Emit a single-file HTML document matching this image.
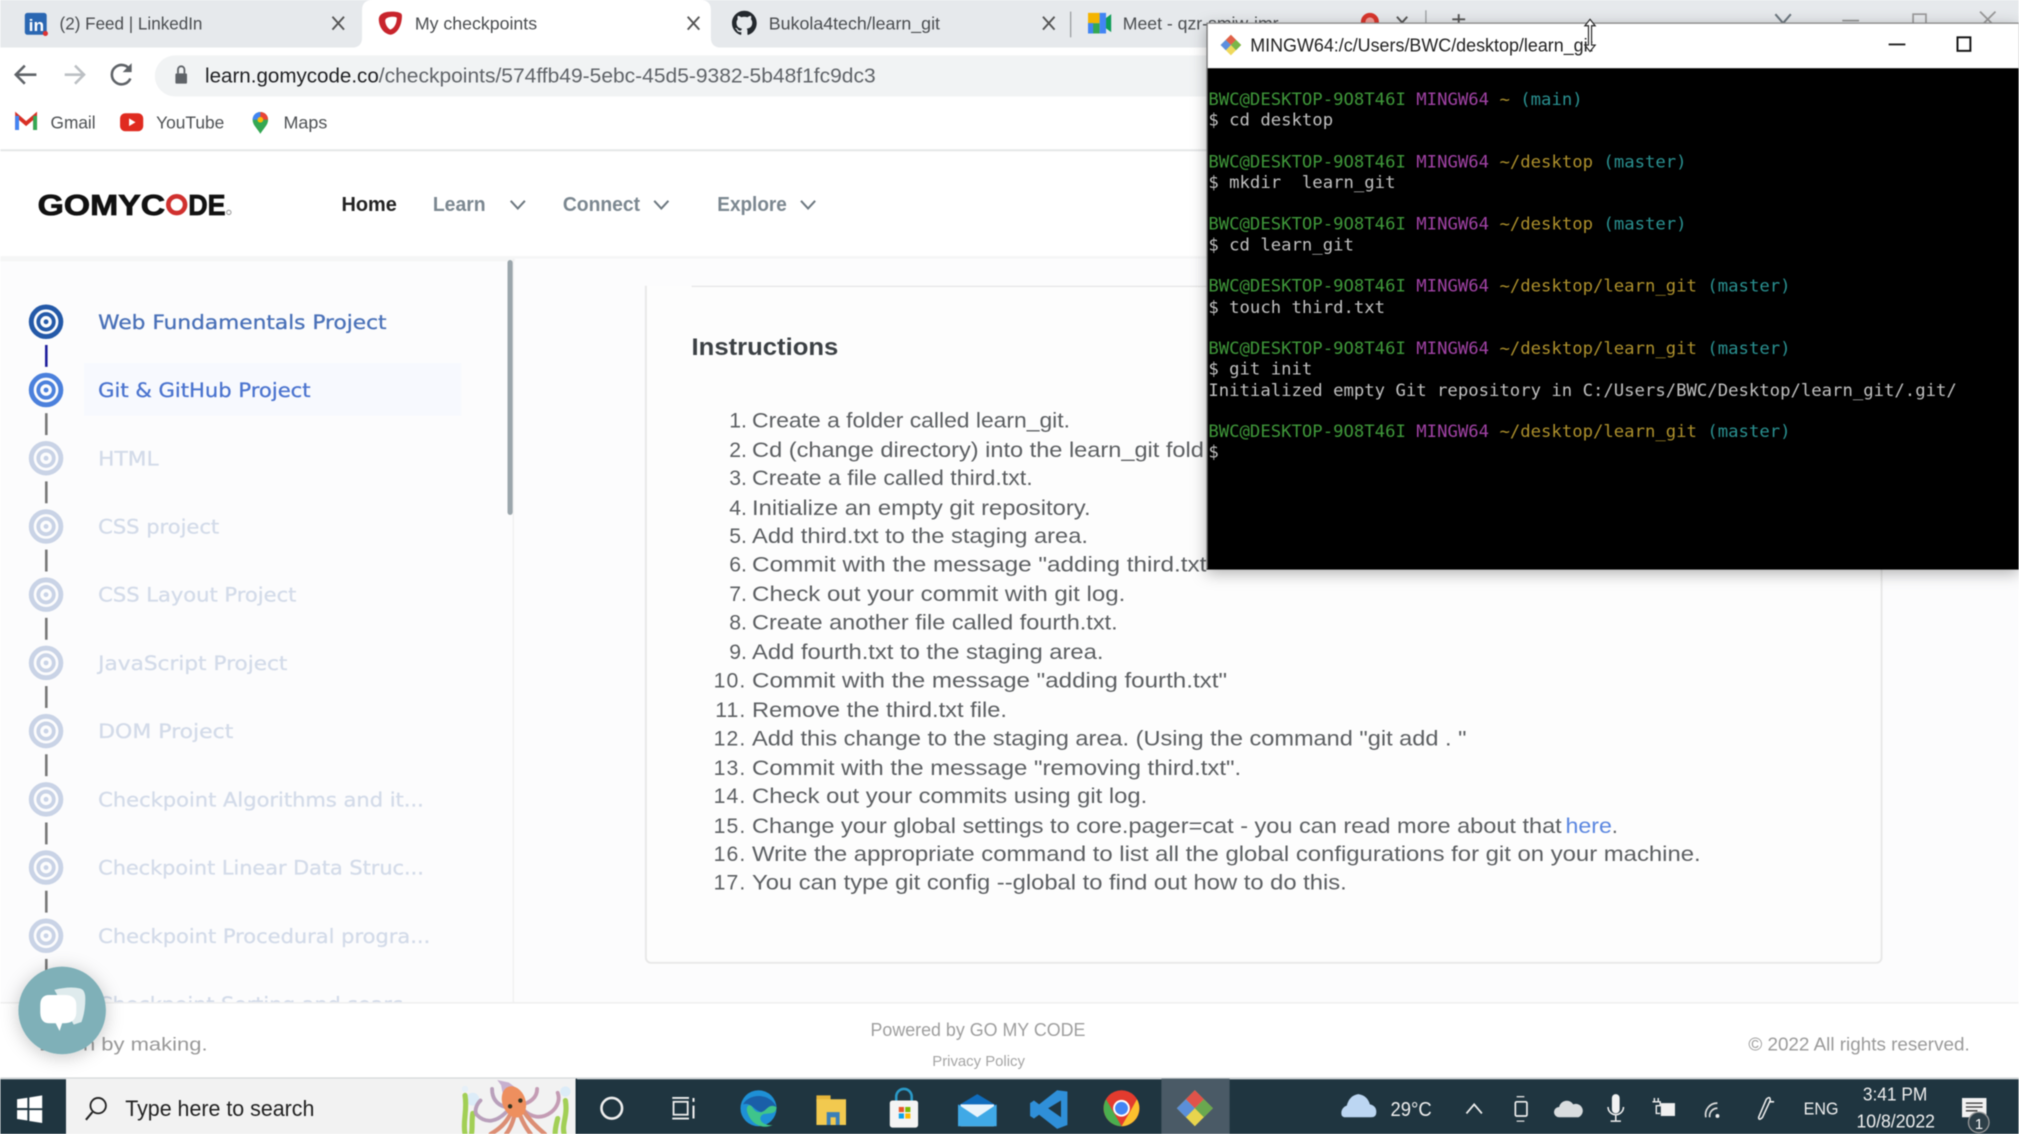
<!DOCTYPE html>
<html lang="en"><head><meta charset="utf-8"><title>My checkpoints</title>
<style>
html,body{margin:0;padding:0;width:2019px;height:1134px;overflow:hidden;background:#fff}
svg{display:block;filter:blur(.5px)}
text{font-family:"Liberation Sans",sans-serif;white-space:pre}
.tab{font-size:13.5px;fill:#4a4d50}
.x{stroke:#555;stroke-width:1.5;fill:none}
.side{font-family:"DejaVu Sans",sans-serif;font-size:15.5px;fill:#d3dbe9;stroke:#d3dbe9;stroke-width:.25}
.nav{font-size:16px;font-weight:bold;fill:#7b8790}
.chev{fill:none;stroke:#6d7880;stroke-width:1.6}
.li{font-size:16.5px;fill:#5c5f62}
.t{font-family:"DejaVu Sans Mono",monospace;font-size:13.42px;fill:#c0c0c0}
.g{fill:#3f983a}.p{fill:#a042a4}.y{fill:#ad902c}.c{fill:#2a9090}
</style></head><body>
<svg xmlns="http://www.w3.org/2000/svg" width="2019" height="1134" viewBox="0 0 1568 881">
<defs>
<filter id="sh" x="-5%" y="-5%" width="110%" height="115%"><feDropShadow dx="0" dy="3" stdDeviation="6" flood-color="#000" flood-opacity=".3"/></filter>
<filter id="sh2" x="-30%" y="-30%" width="160%" height="160%"><feDropShadow dx="0" dy="2" stdDeviation="7" flood-color="#000" flood-opacity=".22"/></filter>
<clipPath id="sideclip"><rect x="0" y="201" width="393" height="578"/></clipPath>
<g id="tgt"><circle r="11.500" fill="none" stroke="currentColor" stroke-width="3.800"/><circle r="6" fill="none" stroke="currentColor" stroke-width="3"/><circle r="1.900" fill="currentColor"/></g>
</defs>

<rect width="1568" height="881" fill="#fff"/>

<!-- Tab strip -->
<rect width="1568" height="37" fill="#e6e9ec"/>
<path d="M273 37q8 0 8-8V8q0-8 8-8h255q8 0 8 8v21q0 8 8 8z" fill="#fff"/>
<rect x="19" y="10" width="17" height="17" rx="2" fill="#2a67b2"/>
<text x="22" y="24" font-size="13" font-weight="bold" fill="#fff" textLength="12" lengthAdjust="spacingAndGlyphs">in</text>
<circle cx="35" cy="26" r="2" fill="#d33"/>
<text class="tab" x="46" y="23" textLength="111" lengthAdjust="spacingAndGlyphs">(2) Feed | LinkedIn</text>
<path class="x" d="M258 13l9 10m0-10l-9 10"/>
<path d="M304 9c5 0 8 1 8 3 0 7-3 14-9 15-6-1-9-7-9-12 0-4 4-6 10-6z" fill="#c8242c"/><path d="M305 13c2 0 3 .5 3 1 0 4-2 8-5 9-2-1-4-4-4-7 0-2 3-3 6-3z" fill="#fff"/>
<text class="tab" x="322" y="23" textLength="95" lengthAdjust="spacingAndGlyphs">My checkpoints</text>
<path class="x" d="M534 13l9 10m0-10l-9 10"/>
<path transform="translate(568.400 8.400) scale(1.200)" fill="#24292e" d="M8 0C3.58 0 0 3.58 0 8c0 3.54 2.29 6.53 5.47 7.59.4.07.55-.17.55-.38 0-.19-.01-.82-.01-1.49-2.01.37-2.53-.49-2.69-.94-.09-.23-.48-.94-.82-1.13-.28-.15-.68-.52-.01-.53.63-.01 1.08.58 1.23.82.72 1.21 1.87.87 2.33.66.07-.52.28-.87.51-1.07-1.78-.2-3.64-.89-3.64-3.95 0-.87.31-1.59.82-2.15-.08-.2-.36-1.02.08-2.12 0 0 .67-.21 2.2.82.64-.18 1.32-.27 2-.27.68 0 1.36.09 2 .27 1.53-1.04 2.2-.82 2.2-.82.44 1.1.16 1.92.08 2.12.51.56.82 1.27.82 2.15 0 3.07-1.87 3.75-3.65 3.95.29.25.54.73.54 1.48 0 1.07-.01 1.93-.01 2.2 0 .21.15.46.55.38A8.013 8.013 0 0016 8c0-4.420-3.580-8-8-8z"/>
<text class="tab" x="597" y="23" textLength="133" lengthAdjust="spacingAndGlyphs">Bukola4tech/learn_git</text>
<path class="x" d="M810 13l9 10m0-10l-9 10"/>
<rect x="831" y="9" width="1" height="20" fill="#9a9da0"/>
<rect x="845" y="10" width="9" height="8" fill="#f4b400"/><rect x="845" y="18" width="9" height="8" fill="#34a853"/><rect x="854" y="10" width="5" height="16" fill="#4285f4"/><path d="M859 14l4-3v14l-4-3z" fill="#0f9d58"/><rect x="845" y="18" width="4" height="8" fill="#4285f4"/>
<text class="tab" x="872" y="23" textLength="121" lengthAdjust="spacingAndGlyphs">Meet - qzr-smiw-jmr</text>
<circle cx="1064" cy="17" r="7" fill="#d8352c"/><circle cx="1064" cy="17" r="3.500" fill="#f2a09a"/>
<path class="x" d="M1085 13l8 9m0-9l-8 9"/>
<rect x="1107" y="8" width="1" height="10" fill="#9a9da0"/>
<path d="M1133 11v8m-5-4h10" stroke="#555" stroke-width="1.500"/>
<path class="chev" d="M1379 11l6 7 6-7" stroke="#888"/>
<path d="M1431 16h13" stroke="#999" stroke-width="1.400"/>
<rect x="1486" y="11" width="10" height="9" fill="none" stroke="#999" stroke-width="1.300"/>
<path d="M1538 9l12 12m0-12l-12 12" stroke="#999" stroke-width="1.400"/>

<!-- Toolbar -->
<rect x="0" y="37" width="1568" height="40" fill="#fff"/>
<rect x="120" y="43" width="900" height="32" rx="16" fill="#f1f3f4"/>
<path d="M28 58H13m6-7l-7 7 7 7" fill="none" stroke="#5f6368" stroke-width="2"/>
<path d="M50 58h14m-6-7l7 7-7 7" fill="none" stroke="#bcc0c4" stroke-width="2"/>
<path d="M101 55a7.500 7.500 0 1 0 0 6" fill="none" stroke="#5f6368" stroke-width="2"/><path d="M102 49v7h-7z" fill="#5f6368"/>
<rect x="136" y="57" width="9" height="8" rx="1" fill="#5f6368"/><path d="M138 57v-3a2.500 2.500 0 0 1 5 0v3" fill="none" stroke="#5f6368" stroke-width="1.400"/>
<text x="159" y="64" font-size="16" fill="#202124" textLength="135" lengthAdjust="spacingAndGlyphs">learn.gomycode.co</text>
<text x="294" y="64" font-size="16" fill="#5f6368" textLength="386" lengthAdjust="spacingAndGlyphs">/checkpoints/574ffb49-5ebc-45d5-9382-5b48f1fc9dc3</text>

<!-- Bookmarks -->
<path d="M13 101V90l7 6 7-6v11" fill="none" stroke="#d93025" stroke-width="3"/><path d="M13 90v11" stroke="#4285f4" stroke-width="3"/><path d="M27 90v11" stroke="#34a853" stroke-width="3"/>
<text x="39" y="100" font-size="13.500" fill="#4e5154" textLength="35" lengthAdjust="spacingAndGlyphs">Gmail</text>
<rect x="93" y="88" width="18" height="14" rx="4" fill="#e02b20"/><path d="M100 92l5 3-5 3z" fill="#fff"/>
<text x="121" y="100" font-size="13.500" fill="#4e5154" textLength="53" lengthAdjust="spacingAndGlyphs">YouTube</text>
<path d="M202 104c-3-5-6-7-6-11a6 6 0 0 1 12 0c0 4-3 6-6 11z" fill="#34a853"/><path d="M196 93a6 6 0 0 1 6-6l0 6z" fill="#4285f4"/><path d="M202 87a6 6 0 0 1 6 6h-6z" fill="#ea4335"/><circle cx="202" cy="93" r="2.200" fill="#fbbc04"/>
<text x="220" y="100" font-size="13.500" fill="#4e5154" textLength="34" lengthAdjust="spacingAndGlyphs">Maps</text>
<rect x="0" y="116" width="1568" height="1.500" fill="#e4e6e7"/>

<!-- Site nav -->
<text x="29" y="167" font-size="22.500" font-weight="bold" fill="#111" stroke="#111" stroke-width=".6" textLength="99" lengthAdjust="spacingAndGlyphs">GOMYC</text>
<circle cx="137" cy="159" r="6.500" fill="none" stroke="#d0302e" stroke-width="3.600"/>
<text x="146" y="167" font-size="22.500" font-weight="bold" fill="#111" stroke="#111" stroke-width=".6" textLength="29" lengthAdjust="spacingAndGlyphs">DE</text>
<circle cx="177.500" cy="165" r="1.700" fill="none" stroke="#999" stroke-width=".8"/>
<text x="265" y="164" font-size="16" font-weight="bold" fill="#222" textLength="43" lengthAdjust="spacingAndGlyphs">Home</text>
<text class="nav" x="336" y="164" textLength="41" lengthAdjust="spacingAndGlyphs">Learn</text>
<path class="chev" d="M396.500 156l5.500 6 5.500-6"/>
<text class="nav" x="437" y="164" textLength="60" lengthAdjust="spacingAndGlyphs">Connect</text>
<path class="chev" d="M508 156l5.500 6 5.500-6"/>
<text class="nav" x="557" y="164" textLength="54" lengthAdjust="spacingAndGlyphs">Explore</text>
<path class="chev" d="M622 156l5.500 6 5.500-6"/>

<!-- Main background -->
<rect x="0" y="201" width="1568" height="578" fill="#fcfcfd"/>
<rect x="0" y="199" width="1568" height="4" fill="#f5f6f6"/>
<rect x="398" y="201" width="1" height="578" fill="#efefef"/>
<rect x="394" y="202" width="4" height="198" rx="2" fill="#9ba6ac"/>

<!-- Sidebar -->
<rect x="65" y="282" width="293" height="41" fill="#f7f9fe"/>
<g clip-path="url(#sideclip)">
<rect x="34.700" y="268" width="2" height="17" fill="#1d1d9c"/>
<rect x="34.700" y="321" width="2" height="17" fill="#777"/>
<rect x="34.700" y="374" width="2" height="17" fill="#777"/>
<rect x="34.700" y="427" width="2" height="17" fill="#777"/>
<rect x="34.700" y="480" width="2" height="17" fill="#777"/>
<rect x="34.700" y="533" width="2" height="17" fill="#777"/>
<rect x="34.700" y="586" width="2" height="17" fill="#777"/>
<rect x="34.700" y="639" width="2" height="17" fill="#777"/>
<rect x="34.700" y="692" width="2" height="17" fill="#777"/>
<rect x="34.700" y="745" width="2" height="17" fill="#777"/>
<use href="#tgt" x="35.500" y="250" color="#2459a8"/>
<use href="#tgt" x="35.500" y="303" color="#4b80dc"/>
<use href="#tgt" x="35.500" y="356" color="#c9d3e6"/>
<use href="#tgt" x="35.500" y="409" color="#c9d3e6"/>
<use href="#tgt" x="35.500" y="462" color="#c9d3e6"/>
<use href="#tgt" x="35.500" y="515" color="#c9d3e6"/>
<use href="#tgt" x="35.500" y="568" color="#c9d3e6"/>
<use href="#tgt" x="35.500" y="621" color="#c9d3e6"/>
<use href="#tgt" x="35.500" y="674" color="#c9d3e6"/>
<use href="#tgt" x="35.500" y="727" color="#c9d3e6"/>
<text class="side" x="76" y="255.500" style="fill:#4a71b8;stroke:#4a71b8" textLength="224" lengthAdjust="spacingAndGlyphs">Web Fundamentals Project</text>
<text class="side" x="76" y="308.500" style="fill:#4b74cf;stroke:#4b74cf" textLength="165" lengthAdjust="spacingAndGlyphs">Git &amp; GitHub Project</text>
<text class="side" x="76" y="361.500" textLength="47" lengthAdjust="spacingAndGlyphs">HTML</text>
<text class="side" x="76" y="414.500" textLength="94" lengthAdjust="spacingAndGlyphs">CSS project</text>
<text class="side" x="76" y="467.500" textLength="154" lengthAdjust="spacingAndGlyphs">CSS Layout Project</text>
<text class="side" x="76" y="520.500" textLength="147" lengthAdjust="spacingAndGlyphs">JavaScript Project</text>
<text class="side" x="76" y="573.500" textLength="105" lengthAdjust="spacingAndGlyphs">DOM Project</text>
<text class="side" x="76" y="626.500" textLength="253" lengthAdjust="spacingAndGlyphs">Checkpoint Algorithms and it...</text>
<text class="side" x="76" y="679.500" textLength="253" lengthAdjust="spacingAndGlyphs">Checkpoint Linear Data Struc...</text>
<text class="side" x="76" y="732.500" textLength="258" lengthAdjust="spacingAndGlyphs">Checkpoint Procedural progra...</text>
<text class="side" x="76" y="785.500" textLength="252" lengthAdjust="spacingAndGlyphs">Checkpoint Sorting and searc...</text>
</g>

<!-- Card -->
<rect x="501.500" y="205" width="960" height="543" rx="4" fill="#fdfdfd" stroke="#e8e8e8" stroke-width="1.500"/>
<rect x="400" y="201" width="1168" height="21" fill="#fcfcfd"/>
<rect x="537" y="222" width="500" height="1" fill="#e6e6e6"/>
<text x="537" y="276" font-size="19" font-weight="bold" fill="#3c4145" textLength="114" lengthAdjust="spacingAndGlyphs">Instructions</text>
<g text-anchor="end">
<text class="li" x="580" y="332">1.</text><text class="li" x="580" y="355">2.</text><text class="li" x="580" y="377">3.</text><text class="li" x="580" y="400">4.</text><text class="li" x="580" y="422">5.</text><text class="li" x="580" y="444">6.</text><text class="li" x="580" y="467">7.</text><text class="li" x="580" y="489">8.</text><text class="li" x="580" y="512">9.</text><text class="li" x="579.500" y="534" letter-spacing=".8">10.</text><text class="li" x="579.500" y="557" letter-spacing=".8">11.</text><text class="li" x="579.500" y="579" letter-spacing=".8">12.</text><text class="li" x="579.500" y="602" letter-spacing=".8">13.</text><text class="li" x="579.500" y="624" letter-spacing=".8">14.</text><text class="li" x="579.500" y="647" letter-spacing=".8">15.</text><text class="li" x="579.500" y="669" letter-spacing=".8">16.</text><text class="li" x="579.500" y="691" letter-spacing=".8">17.</text>
</g>
<text class="li" x="584" y="332" textLength="247" lengthAdjust="spacingAndGlyphs">Create a folder called learn_git.</text>
<text class="li" x="584" y="355" textLength="351" lengthAdjust="spacingAndGlyphs">Cd (change directory) into the learn_git fold</text>
<text class="li" x="584" y="377" textLength="218" lengthAdjust="spacingAndGlyphs">Create a file called third.txt.</text>
<text class="li" x="584" y="400" textLength="263" lengthAdjust="spacingAndGlyphs">Initialize an empty git repository.</text>
<text class="li" x="584" y="422" textLength="261" lengthAdjust="spacingAndGlyphs">Add third.txt to the staging area.</text>
<text class="li" x="584" y="444" textLength="353" lengthAdjust="spacingAndGlyphs">Commit with the message "adding third.txt</text>
<text class="li" x="584" y="467" textLength="290" lengthAdjust="spacingAndGlyphs">Check out your commit with git log.</text>
<text class="li" x="584" y="489" textLength="284" lengthAdjust="spacingAndGlyphs">Create another file called fourth.txt.</text>
<text class="li" x="584" y="512" textLength="273" lengthAdjust="spacingAndGlyphs">Add fourth.txt to the staging area.</text>
<text class="li" x="584" y="534" textLength="369" lengthAdjust="spacingAndGlyphs">Commit with the message "adding fourth.txt"</text>
<text class="li" x="584" y="557" textLength="198" lengthAdjust="spacingAndGlyphs">Remove the third.txt file.</text>
<text class="li" x="584" y="579" textLength="555" lengthAdjust="spacingAndGlyphs">Add this change to the staging area. (Using the command "git add . "</text>
<text class="li" x="584" y="602" textLength="380" lengthAdjust="spacingAndGlyphs">Commit with the message "removing third.txt".</text>
<text class="li" x="584" y="624" textLength="307" lengthAdjust="spacingAndGlyphs">Check out your commits using git log.</text>
<text class="li" x="584" y="647" textLength="629" lengthAdjust="spacingAndGlyphs">Change your global settings to core.pager=cat - you can read more about that</text>
<text x="1216" y="647" font-size="16.500" fill="#5a86e0" textLength="36" lengthAdjust="spacingAndGlyphs">here</text><text class="li" x="1252" y="647">.</text>
<text class="li" x="584" y="669" textLength="737" lengthAdjust="spacingAndGlyphs">Write the appropriate command to list all the global configurations for git on your machine.</text>
<text class="li" x="584" y="691" textLength="462" lengthAdjust="spacingAndGlyphs">You can type git config --global to find out how to do this.</text>

<!-- Footer -->
<rect x="0" y="779" width="1568" height="59" fill="#fff"/>
<rect x="0" y="778.500" width="1568" height="1.200" fill="#efefef"/>
<text x="30" y="816" font-size="14" fill="#999" textLength="131" lengthAdjust="spacingAndGlyphs">Learn by making.</text>
<text x="676" y="805" font-size="14" fill="#9e9e9e" textLength="167" lengthAdjust="spacingAndGlyphs">Powered by GO MY CODE</text>
<text x="724" y="828" font-size="11.500" fill="#a5a5a5" textLength="72" lengthAdjust="spacingAndGlyphs">Privacy Policy</text>
<text x="1358" y="816" font-size="14" fill="#9a9a9a" textLength="172" lengthAdjust="spacingAndGlyphs">© 2022 All rights reserved.</text>

<!-- Chat bubble -->
<circle cx="48" cy="785" r="34" fill="#7fb0b8" filter="url(#sh2)"/>
<path d="M42 769q12-3 20-1 4 1 4 8 0 10-3 18l-6 2z" fill="#fff" opacity=".75"/>
<path d="M38 773h12q9 0 9 8v5q0 9-10 9h-1l-2 6-3-6h-5q-7 0-7-9v-5q0-8 7-8z" fill="#fff"/>

<!-- Taskbar -->
<rect x="0" y="838" width="1568" height="43" fill="#1f3540"/>
<rect x="0" y="837" width="1568" height="1.500" fill="#d5d8da"/>
<path d="M13 854l8-1.200v8h-8zm9.500-1.400l10-1.600v10h-10zM13 862.500h8v8l-8-1.200zm9.500 0h10v10l-10-1.600z" fill="#fff"/>
<rect x="51" y="838" width="396" height="43" fill="#f2f2f2"/>
<circle cx="76" cy="859" r="6" fill="none" stroke="#222" stroke-width="1.400"/><path d="M71.500 864l-5 6" stroke="#222" stroke-width="1.600"/>
<text x="97" y="867" font-size="17.500" fill="#222" textLength="147" lengthAdjust="spacingAndGlyphs">Type here to search</text>
<!-- octopus -->
<circle cx="367" cy="854" r="5" fill="#dcecf8"/><circle cx="439" cy="848" r="4" fill="#dcecf8"/><circle cx="361" cy="846" r="2.500" fill="#e6f0f8"/>
<g fill="none" stroke-linecap="round">
<path d="M361 881c-2-10 2-18 0-30M366 881c1-6 0-10 1-16M438 881c-2-8 3-14 1-26M431 881c0-5 1-8 2-12" stroke="#a2cf55" stroke-width="4"/>
<path d="M393 864c-8 8-16 9-23 2-2-3 0-8 3-11M392 860c-6-2-10-6-10-14" stroke="#b9a0bb" stroke-width="3"/>
<path d="M406 862c6 6 14 8 22 2 5-4 7-10 5-15M405 858c6-1 12-5 12-12" stroke="#c49cb4" stroke-width="3"/>
<path d="M396 866c-3 6-8 11-15 15M399 868c-1 4-3 9-6 13M404 867c2 5 4 9 8 14M407 864c4 6 10 12 16 17" stroke="#dc8e74" stroke-width="3.400"/>
</g>
<path d="M389 843l-3-4 9 2 8 6-12 6z" fill="#c7b0cf"/>
<ellipse cx="399" cy="856" rx="9" ry="12.500" fill="#ee8f5e" transform="rotate(-20 399 856)"/>
<circle cx="396" cy="859.500" r="1.700" fill="#332"/><circle cx="404" cy="855" r="1.700" fill="#332"/>
<rect x="447" y="838" width="1" height="43" fill="#0f2530"/>
<circle cx="475" cy="861" r="8" fill="none" stroke="#eee" stroke-width="2"/>
<path d="M522 853h13M522 869h13" stroke="#eee" stroke-width="1.400"/><rect x="523" y="856" width="11" height="10" fill="none" stroke="#eee" stroke-width="1.400"/><path d="M538.500 853v3M538.500 859v10" stroke="#eee" stroke-width="1.600"/>
<!-- Edge -->
<circle cx="589" cy="861" r="14" fill="#1e90d6"/>
<path d="M577 858c4-8 20-10 26 2 1 6-8 5-12 4-6-2-8-8-14-6z" fill="#1a5fa8"/><path d="M603 860c0 7-8 4-11 6-4 3 0 9 8 8-6 3-14 1-18-6-2-4-3-7-1-9 4-2 3 6 10 5 5-1 5-7 12-4z" fill="#3fc48b"/>
<!-- Explorer -->
<rect x="634" y="851" width="11" height="5" fill="#e6b53a"/><rect x="634" y="854" width="23" height="20" fill="#f2c94f"/><rect x="642" y="864" width="10" height="10" fill="#3a7fb8"/><rect x="645" y="868" width="4" height="6" fill="#f2c94f"/>
<!-- Store -->
<rect x="691" y="855" width="22" height="21" rx="2" fill="#f4f4f4"/><path d="M696 855v-3a6 6 0 0 1 12 0v3" fill="none" stroke="#2a9ac8" stroke-width="2"/><rect x="698" y="860" width="4" height="4" fill="#e8552a"/><rect x="703" y="860" width="4" height="4" fill="#7fb900"/><rect x="698" y="865" width="4" height="4" fill="#0aa2e8"/><rect x="703" y="865" width="4" height="4" fill="#fcb900"/>
<!-- Mail -->
<path d="M744 859l15-9 15 9v15h-30z" fill="#0f6cbd"/><rect x="746" y="858" width="26" height="17" fill="#e9f4fb"/><path d="M744 858l15 10 15-10v17h-30z" fill="#40a9e6"/>
<!-- VS Code -->
<g transform="translate(4 0)"><path d="M825 848v26l-8 3-14-11-4 3-3-2v-10l3-2 4 3 14-11z" fill="#2f8fd8"/><path d="M820 855l-10 6 10 7z" fill="#1f3540"/></g>
<!-- Chrome -->
<circle cx="871" cy="861" r="14" fill="#e33b2e"/><path d="M883 854a14 14 0 0 1-12 21l7-12z" fill="#fbc02d"/><path d="M871 875a14 14 0 0 1-12-21l7 12z" fill="#4aae4e"/><circle cx="871" cy="861" r="6.500" fill="#fff"/><circle cx="871" cy="861" r="5" fill="#4285f4"/>
<!-- Git bash active -->
<rect x="902" y="838" width="53" height="43" fill="#4a5a66"/>
<path d="M928 847l14 14-14 14-14-14z" fill="#e8d44d"/><path d="M928 847l7 7-7 7-7-7z" fill="#e0534a"/><path d="M935 854l7 7-7 7-7-7z" fill="#6aa84f"/><path d="M921 854l7 7-7 7-7-7z" fill="#5b8fd9"/>
<!-- Tray -->
<path d="M1045 868q-4 0-3-5 1-3 4-4 2-8 9-9 7 1 9 8 5 1 5 6 0 4-4 4z" fill="#bcd6f2"/>
<text x="1080" y="867" font-size="16" fill="#eee" textLength="32" lengthAdjust="spacingAndGlyphs">29°C</text>
<path d="M1139 865l6-7 6 7" fill="none" stroke="#eee" stroke-width="1.400"/>
<rect x="1177" y="856" width="9" height="11" rx="1" fill="none" stroke="#eee" stroke-width="1.300"/><path d="M1178 852h6M1178 871h6" stroke="#ddd"/>
<path d="M1211 868a4 4 0 0 1 0-8 6 6 0 0 1 11-2 5 5 0 0 1 4 10z" fill="#d8dcde"/>
<rect x="1252" y="850" width="6" height="15" rx="3" fill="#f2f2f2"/><path d="M1249 860a6 6 0 0 0 12 0M1255 866v5m-4 0h8" fill="none" stroke="#eee" stroke-width="1.200"/>
<rect x="1290" y="857" width="11" height="10" fill="#f0f0f0"/><path d="M1285 853v3m3-3v3m-4.500 0h6v3h-3v6h3" fill="none" stroke="#eee" stroke-width="1.100"/>
<path d="M1325 868a9 9 0 0 1 9-11M1328 868a6 6 0 0 1 6-7" fill="none" stroke="#ddd" stroke-width="1.300"/><circle cx="1334" cy="867" r="1.500" fill="#eee"/>
<path d="M1366 868l6-14q3-3 3 1l-6 13q-3 3-3 0zM1374 856h4" fill="none" stroke="#eee" stroke-width="1.200"/>
<text x="1401" y="866" font-size="13.500" fill="#eee" textLength="27" lengthAdjust="spacingAndGlyphs">ENG</text>
<text x="1447" y="855" font-size="14" fill="#eee" textLength="50" lengthAdjust="spacingAndGlyphs">3:41 PM</text>
<text x="1442" y="876" font-size="14" fill="#eee" textLength="61" lengthAdjust="spacingAndGlyphs">10/8/2022</text>
<path d="M1524 853h19v15h-6v4l-5-4h-8z" fill="#f2f2f2"/><path d="M1527 857h13M1527 860h13M1527 863h9" stroke="#333" stroke-width="1"/>
<circle cx="1537" cy="872" r="8" fill="#2d3f48" stroke="#999"/><text x="1534" y="877" font-size="11.500" fill="#fff">1</text>

<!-- Terminal window -->
<g filter="url(#sh)">
<rect x="937" y="18" width="631" height="424.500" fill="#000"/>
<rect x="937" y="18" width="631" height="35" fill="#fff"/>
<rect x="937" y="17.500" width="631" height="1" fill="#888"/>
<rect x="937" y="18" width="1" height="424" fill="#777"/>
</g>
<path d="M956 27l8 8-8 8-8-8z" fill="#efd95c"/><path d="M956 27l4 4-4 4-4-4z" fill="#e0604a"/><path d="M960 31l4 4-4 4-4-4z" fill="#7ab648"/><path d="M952 31l4 4-4 4-4-4z" fill="#5b8fe0"/>
<text x="971" y="40" font-size="14" fill="#222" textLength="266" lengthAdjust="spacingAndGlyphs">MINGW64:/c/Users/BWC/desktop/learn_git</text>
<path d="M1467 34.500h13" stroke="#222" stroke-width="1.500"/>
<rect x="1520.500" y="29" width="10" height="10.500" fill="none" stroke="#111" stroke-width="1.500"/>
<path d="M1235 15l-4 5h2.800v15h-2.800l4 5 4-5h-2.800v-15h2.800z" fill="#fff" stroke="#222" stroke-width=".9"/>

<g xml:space="preserve">
<text class="t" x="938.500" y="81.500"><tspan class="g">BWC@DESKTOP-9O8T46I</tspan> <tspan class="p">MINGW64</tspan> <tspan class="y">~</tspan> <tspan class="c">(main)</tspan></text>
<text class="t" x="938.500" y="97.500">$ cd desktop</text>
<text class="t" x="938.500" y="130"><tspan class="g">BWC@DESKTOP-9O8T46I</tspan> <tspan class="p">MINGW64</tspan> <tspan class="y">~/desktop</tspan> <tspan class="c">(master)</tspan></text>
<text class="t" x="938.500" y="146">$ mkdir  learn_git</text>
<text class="t" x="938.500" y="178.500"><tspan class="g">BWC@DESKTOP-9O8T46I</tspan> <tspan class="p">MINGW64</tspan> <tspan class="y">~/desktop</tspan> <tspan class="c">(master)</tspan></text>
<text class="t" x="938.500" y="194.500">$ cd learn_git</text>
<text class="t" x="938.500" y="226.500"><tspan class="g">BWC@DESKTOP-9O8T46I</tspan> <tspan class="p">MINGW64</tspan> <tspan class="y">~/desktop/learn_git</tspan> <tspan class="c">(master)</tspan></text>
<text class="t" x="938.500" y="243">$ touch third.txt</text>
<text class="t" x="938.500" y="275"><tspan class="g">BWC@DESKTOP-9O8T46I</tspan> <tspan class="p">MINGW64</tspan> <tspan class="y">~/desktop/learn_git</tspan> <tspan class="c">(master)</tspan></text>
<text class="t" x="938.500" y="291">$ git init</text>
<text class="t" x="938.500" y="307.500">Initialized empty Git repository in C:/Users/BWC/Desktop/learn_git/.git/</text>
<text class="t" x="938.500" y="339.500"><tspan class="g">BWC@DESKTOP-9O8T46I</tspan> <tspan class="p">MINGW64</tspan> <tspan class="y">~/desktop/learn_git</tspan> <tspan class="c">(master)</tspan></text>
<text class="t" x="938.500" y="355.500">$</text>
</g>
</svg>
</body></html>
